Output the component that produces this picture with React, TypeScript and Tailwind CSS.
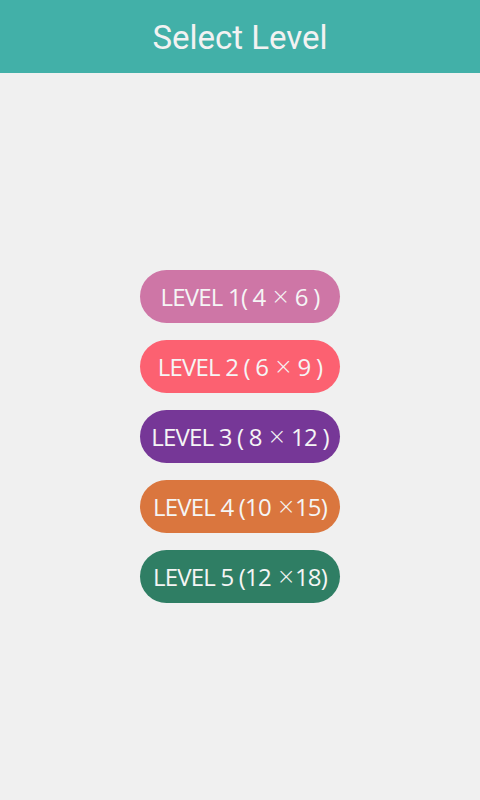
import React from "react";

const levels = [
  { a: "LEVEL 1( 4 ", b: " 6 )", bg: "bg-[#ce76a6]" },
  { a: "LEVEL 2 ( 6 ", b: " 9 )", bg: "bg-[#fc6171]" },
  { a: "LEVEL 3 ( 8 ", b: " 12 )", bg: "bg-[#763797]" },
  { a: "LEVEL 4 (10 ", b: "15)", bg: "bg-[#da763e]" },
  { a: "LEVEL 5 (12 ", b: "18)", bg: "bg-[#2f7e64]" },
];

export default function App() {
  return (
    <div className="w-[480px] h-[800px] bg-[#f0f0f0] flex flex-col">
      <div className="h-[73px] bg-[#42b0a8] flex items-center justify-center">
        <span className="text-[#f2f2f2] text-[33px] font-['Roboto',sans-serif] pt-[2px]">Select Level</span>
      </div>
      <div className="flex flex-col items-center gap-[17px] pt-[197px]">
        {levels.map((l) => (
          <div
            key={l.a}
            className={`w-[200px] h-[53px] rounded-[27px] ${l.bg} flex items-center justify-center text-[#f5f5f5] text-[24px] font-['Open_Sans',sans-serif] tracking-[-0.8px] whitespace-pre`}
          >
            <span>{l.a}</span>
            <span className="text-[23px] font-['DejaVu_Sans',sans-serif] font-extralight leading-none">×</span>
            <span>{l.b}</span>
          </div>
        ))}
      </div>
    </div>
  );
}
